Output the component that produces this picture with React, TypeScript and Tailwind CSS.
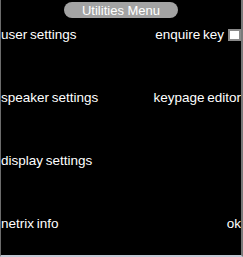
export default function App() {
  const rows: [string, string | null][] = [
    ["speaker settings", "keypage editor"],
    ["display settings", null],
    ["netrix info", "ok"],
  ];

  return (
    <div
      className="w-[243px] h-[257px] bg-black border-l border-l-[#6b6b6b] border-r-2 border-r-[#7a7a7a] border-b-2 border-b-[#c4c8d4] text-white overflow-hidden"
      style={{ fontFamily: '"Liberation Sans", Arial, sans-serif' }}
    >
      <div className="flex justify-center pt-[2px]">
        <div className="w-[114px] h-[16px] rounded-full bg-[#a3a3a3] flex items-center justify-center text-[13px] leading-[15px] text-white">
          Utilities Menu
        </div>
      </div>

      <div className="mt-[9px] flex flex-col gap-[48px] text-[13.5px] leading-[15px] [word-spacing:-1px]">
        <div className="h-[15px] flex items-center justify-between">
          <span>user settings</span>
          <span className="flex items-center gap-[4px]">
            enquire key
            <span className="w-[13px] h-[12px] bg-white border-2 border-[#8a8a8a] inline-block" />
          </span>
        </div>
        {rows.map(([left, right]) => (
          <div key={left} className="h-[15px] flex items-center justify-between">
            <span>{left}</span>
            {right && <span>{right}</span>}
          </div>
        ))}
      </div>
    </div>
  );
}
